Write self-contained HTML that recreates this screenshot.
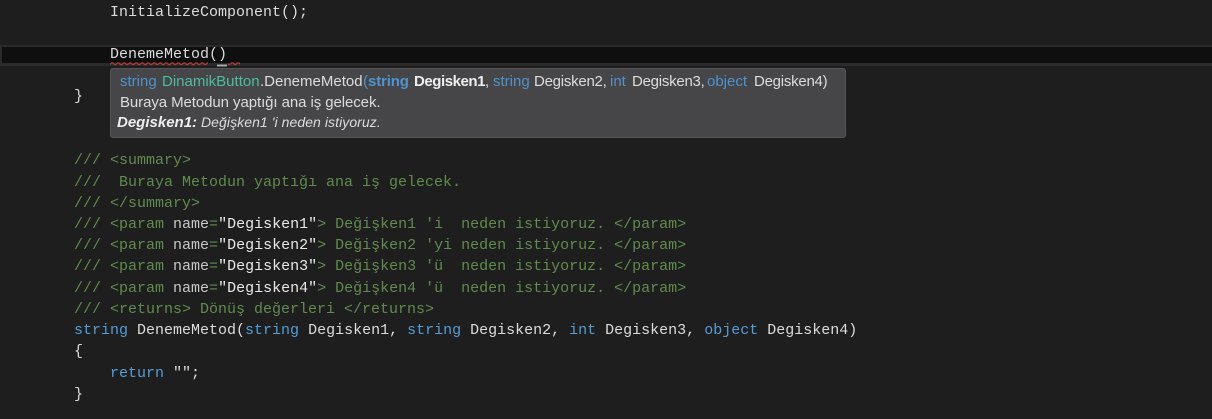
<!DOCTYPE html>
<html><head><meta charset="utf-8">
<style>
html,body{margin:0;padding:0;background:#1e1e1e;width:1212px;height:419px;overflow:hidden}
.l{position:absolute;left:74px;height:21px;font:15px/21px "Liberation Mono",monospace;color:#dcdcdc;white-space:pre}
.c{color:#608b4e}.k{color:#569cd6}
#cur{position:absolute;left:0;top:45px;height:16px;background:#0f0f0f;border:2px solid #2a2a2a;border-right:none;border-bottom-width:3px;width:1210px}
#tip{position:absolute;left:110px;top:68px;width:734px;height:68px;background:#464648;border:1px solid #565658;border-radius:3px}
.t{position:absolute;font:15px/20px "Liberation Sans",sans-serif;color:#dcdcdc;white-space:pre}
.r1{top:72px}
.b{color:#4f92cc}
.n{letter-spacing:-.25px}
</style></head><body>
<div id="cur"></div>
<div class="l" style="top:2px;left:110px">InitializeComponent();</div>
<div class="l" style="top:44px;left:110px">DenemeMetod()</div>
<svg style="position:absolute;left:110px;top:60px" width="130" height="8">
<defs><pattern id="w" width="6" height="8" patternUnits="userSpaceOnUse"><path d="M0 4.5L1.5 3 3 3 4.5 4.5 6 4.5" fill="none" stroke="#b8393a" stroke-width="1.2"/></pattern></defs>
<rect x="0" y="0" width="98" height="8" fill="url(#w)"/>
<rect x="118" y="0" width="12" height="8" fill="url(#w)"/>
<rect x="107" y="4.5" width="10" height="2" fill="#a0a8ae"/></svg>
<div class="l" style="top:86px">}</div>
<div id="tip"></div>
<span class="t r1 b" style="left:120px">string</span>
<span class="t r1" style="left:162px;color:#4bbd9f">DinamikButton</span>
<span class="t r1" style="left:260px">.DenemeMetod</span>
<span class="t r1 b" style="left:363px">(</span>
<span class="t r1 b" style="left:368px;font-weight:bold;letter-spacing:-.15px">string</span>
<span class="t r1" style="left:414px;font-weight:bold;color:#eee;letter-spacing:-.45px">Degisken1</span>
<span class="t r1" style="left:485px">,</span>
<span class="t r1 b" style="left:493px">string</span>
<span class="t r1 n" style="left:534px">Degisken2,</span>
<span class="t r1 b" style="left:610px">int</span>
<span class="t r1 n" style="left:632px">Degisken3,</span>
<span class="t r1 b" style="left:707px">object</span>
<span class="t r1 n" style="left:754px">Degisken4)</span>
<div class="t" style="left:120px;top:93px;letter-spacing:-.08px">Buraya Metodun yaptığı ana iş gelecek.</div>
<div class="t" style="left:117px;top:113px;font-style:italic;font-weight:bold;color:#eee">Degisken1:</div>
<div class="t" style="left:201px;top:112px;font-size:14px;font-style:italic;letter-spacing:.07px">Değişken1 'i neden istiyoruz.</div>
<div class="l c" style="top:150px">/// &lt;summary&gt;</div>
<div class="l c" style="top:172px">///  Buraya Metodun yaptığı ana iş gelecek.</div>
<div class="l c" style="top:193px">/// &lt;/summary&gt;</div>
<div class="l c" style="top:214px">/// &lt;param <span style="color:#c8c8c8">name</span>=<span style="color:#e8e8e8">"Degisken1"</span>&gt; Değişken1 'i  neden istiyoruz. &lt;/param&gt;</div>
<div class="l c" style="top:235px">/// &lt;param <span style="color:#c8c8c8">name</span>=<span style="color:#e8e8e8">"Degisken2"</span>&gt; Değişken2 'yi neden istiyoruz. &lt;/param&gt;</div>
<div class="l c" style="top:256px">/// &lt;param <span style="color:#c8c8c8">name</span>=<span style="color:#e8e8e8">"Degisken3"</span>&gt; Değişken3 'ü  neden istiyoruz. &lt;/param&gt;</div>
<div class="l c" style="top:278px">/// &lt;param <span style="color:#c8c8c8">name</span>=<span style="color:#e8e8e8">"Degisken4"</span>&gt; Değişken4 'ü  neden istiyoruz. &lt;/param&gt;</div>
<div class="l c" style="top:299px">/// &lt;returns&gt; Dönüş değerleri &lt;/returns&gt;</div>
<div class="l" style="top:320px"><span class="k">string</span> DenemeMetod(<span class="k">string</span> Degisken1, <span class="k">string</span> Degisken2, <span class="k">int</span> Degisken3, <span class="k">object</span> Degisken4)</div>
<div class="l" style="top:341px">{</div>
<div class="l" style="top:363px">    <span class="k">return</span> "";</div>
<div class="l" style="top:384px">}</div>
</body></html>
